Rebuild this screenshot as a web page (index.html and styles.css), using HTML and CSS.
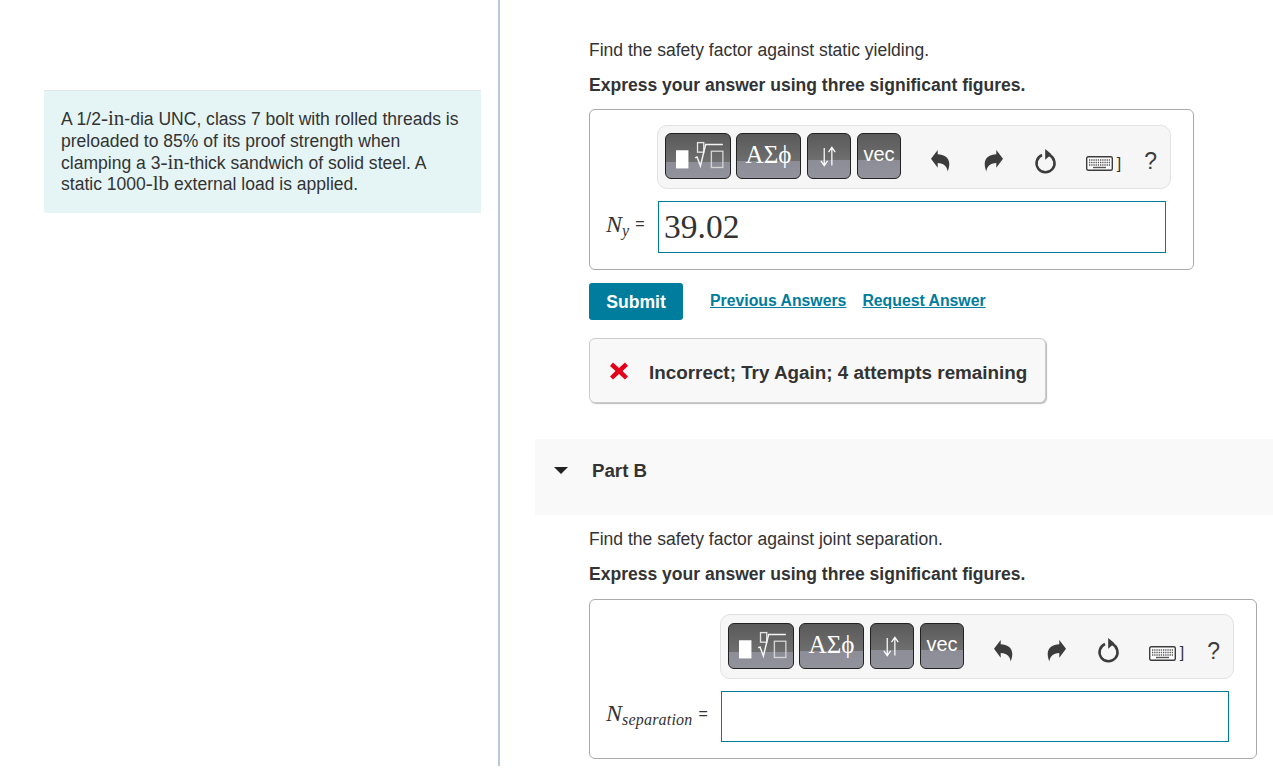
FILE: index.html
```html
<!DOCTYPE html>
<html lang="en">
<head>
<meta charset="utf-8">
<title>Part B</title>
<link rel="stylesheet" href="styles.css">
</head>
<body>
<svg class="sprites" width="0" height="0" aria-hidden="true">
  <symbol id="i-math" viewBox="0 0 66 46">
    <rect x="10" y="17" width="13" height="19" fill="#fff"/>
    <rect x="32.500" y="9" width="6.500" height="10" fill="none" stroke="#e4e4e4" stroke-width="1.400"/>
    <path d="M30 25l2-1 3.500 9.500L41 11h18" fill="none" stroke="#f4f4f4" stroke-width="1.500"/>
    <rect x="47" y="18" width="12" height="17" fill="none" stroke="#d4d4d4" stroke-width="1.400"/>
  </symbol>
  <symbol id="i-arrows" viewBox="0 0 44 46">
    <path d="M17 14.500V33M13.500 28l3.500 5 3.500-5M25 33V14M21.500 19l3.500-5 3.500 5" fill="none" stroke="#fff" stroke-width="1.300"/>
  </symbol>
  <symbol id="i-undo" viewBox="0 0 19 22">
    <path d="M0 8.700 6.700 0v4.300C13 4.500 18.300 7.500 18.300 14c0 3-1 6-1.600 7.500C16.200 17 13 13 6.700 13v4.700z" fill="#3c3c3c"/>
  </symbol>
  <symbol id="i-redo" viewBox="0 0 19 22">
    <path d="M19 8.700 12.300 0v4.300C6 4.500.7 7.500.7 14c0 3 1 6 1.600 7.500C2.800 17 6 13 12.300 13v4.700z" fill="#3c3c3c"/>
  </symbol>
  <symbol id="i-reset" viewBox="0 0 24 25">
    <path d="M15.500 6.200a9 9 0 1 1-7.500-.2" fill="none" stroke="#3c3c3c" stroke-width="2.500"/>
    <path d="M11.200 0 17.500 5.300l-6.300 5.400z" fill="#3c3c3c"/>
  </symbol>
  <symbol id="i-keys" viewBox="0 0 27 15">
    <rect x=".7" y=".7" width="25.600" height="13.600" rx="1.500" fill="#fff" stroke="#3c3c3c" stroke-width="1.400"/>
    <path d="M3 4h21M3 6.500h21M3 9h21" stroke="#555" stroke-width="1.300" stroke-dasharray="1.300 .9"/>
    <path d="M7 11.500h13" stroke="#555" stroke-width="1.400"/>
  </symbol>
</svg>

<div class="page">
  <aside class="sidebar">
    <div class="callout">
      <p>A 1/2<span class="unit">-in</span>-dia UNC, class 7 bolt with rolled threads is preloaded to 85% of its proof strength when clamping a 3<span class="unit">-in</span>-thick sandwich of solid steel. A static 1000<span class="unit">-lb</span> external load is applied.</p>
    </div>
  </aside>

  <main class="main">
    <section class="part part-a">
      <p class="prompt">Find the safety factor against static yielding.</p>
      <p class="instruction">Express your answer using three significant figures.</p>

      <div class="answer answer-a">
        <div class="toolbar">
          <div class="tools">
            <span class="tool tool-math"><svg class="tool-svg"><use href="#i-math"/></svg></span>
            <span class="tool tool-greek">ΑΣϕ</span>
            <span class="tool tool-arrows"><svg class="tool-svg"><use href="#i-arrows"/></svg></span>
            <span class="tool tool-vec">vec</span>
          </div>
          <div class="actions">
            <svg class="act act-undo"><use href="#i-undo"/></svg>
            <svg class="act act-redo"><use href="#i-redo"/></svg>
            <svg class="act act-reset"><use href="#i-reset"/></svg>
            <span class="keys"><svg class="act-keys"><use href="#i-keys"/></svg><span class="bracket">]</span></span>
            <span class="help">?</span>
          </div>
        </div>
        <div class="entry">
          <span class="label"><i class="var">N<sub>y</sub></i> <span class="eq">=</span></span>
          <div class="field">39.02</div>
        </div>
      </div>

      <div class="submit-row">
        <span class="submit">Submit</span>
        <a class="link" href="#">Previous Answers</a>
        <a class="link" href="#">Request Answer</a>
      </div>

      <div class="feedback">
        <svg class="cross" viewBox="0 0 20 20"><path d="M4 1.500 10 7l6-5.500L19 5l-5.500 5 5.500 5.500L16 18.500 10 13l-6 5.500L1 15.500 6.500 10 1 5z" fill="#e2001a"/></svg>
        <span class="feedback-text">Incorrect; Try Again; 4 attempts remaining</span>
      </div>
    </section>

    <header class="part-head">
      <span class="caret"></span>
      <h2>Part B</h2>
    </header>

    <section class="part part-b">
      <p class="prompt">Find the safety factor against joint separation.</p>
      <p class="instruction">Express your answer using three significant figures.</p>

      <div class="answer answer-b">
        <div class="toolbar">
          <div class="tools">
            <span class="tool tool-math"><svg class="tool-svg"><use href="#i-math"/></svg></span>
            <span class="tool tool-greek">ΑΣϕ</span>
            <span class="tool tool-arrows"><svg class="tool-svg"><use href="#i-arrows"/></svg></span>
            <span class="tool tool-vec">vec</span>
          </div>
          <div class="actions">
            <svg class="act act-undo"><use href="#i-undo"/></svg>
            <svg class="act act-redo"><use href="#i-redo"/></svg>
            <svg class="act act-reset"><use href="#i-reset"/></svg>
            <span class="keys"><svg class="act-keys"><use href="#i-keys"/></svg><span class="bracket">]</span></span>
            <span class="help">?</span>
          </div>
        </div>
        <div class="entry">
          <span class="label label-long"><i class="var">N<sub>separation</sub></i> <span class="eq">=</span></span>
          <div class="field field-empty"></div>
        </div>
      </div>
    </section>
  </main>
</div>
</body>
</html>
```
FILE: styles.css
```css
* { box-sizing: border-box; }
html, body { margin: 0; height: 100%; overflow: hidden; background: #fff; }
body { font-family: "Liberation Sans", Arial, sans-serif; font-size: 17.550px; color: #333; }
.sprites { display: block; height: 0; }

.page { display: flex; height: 766px; overflow: hidden; }

.sidebar { flex: 0 0 500px; border-right: 2px solid #b7c9da; padding: 90px 17px 0 44px; }
.callout { height: 123px; background: #e5f5f6; border-top: 1px solid #dfe7ea; padding: 18px 17px 0; }
.callout p { margin: 0; font-size: 17.550px; line-height: 21.800px; color: #333; }
.unit { font-family: "Liberation Serif", serif; font-size: 21px; line-height: 0; }

.main { flex: 1; min-width: 0; padding: 0 0 0 35px; }
.part { padding-left: 54px; }
.part-a { padding-top: 39px; height: 439px; }
.part-b { padding-top: 13px; }
.prompt { margin: 0; font-size: 17.550px; line-height: 22px; color: #333; }
.instruction { margin: 13px 0 0; font-size: 17.550px; font-weight: 700; line-height: 22px; color: #333; }

.answer { border: 1px solid #aaa; border-radius: 6px; margin-top: 13px; padding: 15px 0 0 0; }
.answer-a { width: 605px; height: 161px; }
.answer-b { width: 668px; height: 160px; margin-top: 14px; padding-top: 14px; }
.answer-a .toolbar { margin-left: 67px; }
.answer-b .toolbar { margin-left: 130px; height: 65px; }
.answer-b .tools { margin-bottom: 1px; }

.toolbar { width: 514px; height: 64px; display: flex; justify-content: space-between; align-items: center; background: #f6f6f6; border: 1px solid #e2e2e2; border-radius: 10px; padding: 0 7px; }
.tools { display: flex; gap: 5px; margin-bottom: 2px; }
.tool { display: flex; align-items: center; justify-content: center; height: 46px; border: 1px solid #222; border-radius: 6px; color: #fff; background: linear-gradient(#5a5a5a 0, #6e6e6e 58%, #8d8d98 58%, #92929c 100%); }
.tool-math { width: 66px; background: linear-gradient(#5a5a5a 0, #6e6e6e 63%, #8d8d98 63%, #92929c 100%); }
.tool-greek { width: 65px; font-family: "Liberation Serif", serif; font-size: 25px; padding-bottom: 3px; background: linear-gradient(#5a5a5a 0, #6e6e6e 62%, #8d8d98 62%, #92929c 100%); }
.tool-arrows { width: 44px; margin-left: 1px; }
.tool-vec { width: 44px; font-size: 20px; margin-left: 1px; padding-bottom: 3px; }
.tool-svg { width: 100%; height: 100%; display: block; }

.actions { display: flex; align-items: center; height: 100%; padding-top: 8px; }
.act { display: block; }
.act-undo { width: 19px; height: 22px; margin-right: 34px; }
.act-redo { width: 19px; height: 22px; margin-right: 31px; }
.act-reset { width: 24px; height: 25px; margin-right: 28px; }
.keys { display: flex; align-items: center; margin-top: 5px; margin-right: 23px; }
.act-keys { width: 27px; height: 15px; display: block; }
.bracket { font-size: 16px; line-height: 16px; margin-left: 4px; color: #333; }
.help { font-size: 23px; line-height: 26px; margin-right: 6px; color: #3c3c3c; }

.entry { display: flex; align-items: center; justify-content: flex-end; margin-top: 12px; }
.answer-a .entry { width: 576px; }
.answer-b .entry { width: 639px; }
.label { flex: 1; padding: 0 0 6px 16px; display: flex; gap: 6px; align-items: center; font-family: "Liberation Serif", serif; font-size: 24px; white-space: nowrap; }
.var { font-style: italic; }
.var sub { font-size: 16px; line-height: 0; vertical-align: -4px; letter-spacing: .2px; }
.eq { font-family: "Liberation Sans", sans-serif; font-size: 16px; }
.field { flex: none; width: 508px; height: 52px; border: 1px solid #007c9d; padding-left: 5px; font-family: "Liberation Serif", serif; font-size: 33.500px; line-height: 50px; color: #333; }
.field-empty { height: 51px; }

.submit-row { display: flex; align-items: center; margin-top: 13px; }
.submit { width: 94px; height: 37px; border-radius: 3px; background: #007c9d; color: #fff; font-size: 17.600px; font-weight: 700; line-height: 38px; text-align: center; margin-right: 27px; }
.link { color: #007c9d; font-size: 15.800px; font-weight: 700; text-decoration: underline; margin-right: 16px; margin-bottom: 2px; }

.feedback { display: flex; align-items: center; width: 457px; height: 65px; margin-top: 18px; padding: 1px 0 0 19px; border: 1px solid #ccc; border-radius: 6px; background: #f8f8f8; box-shadow: 1px 1px 1px #bbb; font-size: 18.850px; font-weight: 700; color: #333; }
.cross { width: 20px; height: 20px; margin-right: 20px; flex: none; }
.feedback-text { margin-top: 3px; }

.part-head { display: flex; align-items: flex-start; height: 76px; background: #f9f9f9; padding: 20px 0 0 19px; }
.caret { width: 0; height: 0; margin-top: 8px; border-left: 7px solid transparent; border-right: 7px solid transparent; border-top: 7px solid #222; }
.part-head h2 { margin: 1px 0 0 24px; font-size: 18.700px; font-weight: 700; line-height: 22px; color: #333; }
```
